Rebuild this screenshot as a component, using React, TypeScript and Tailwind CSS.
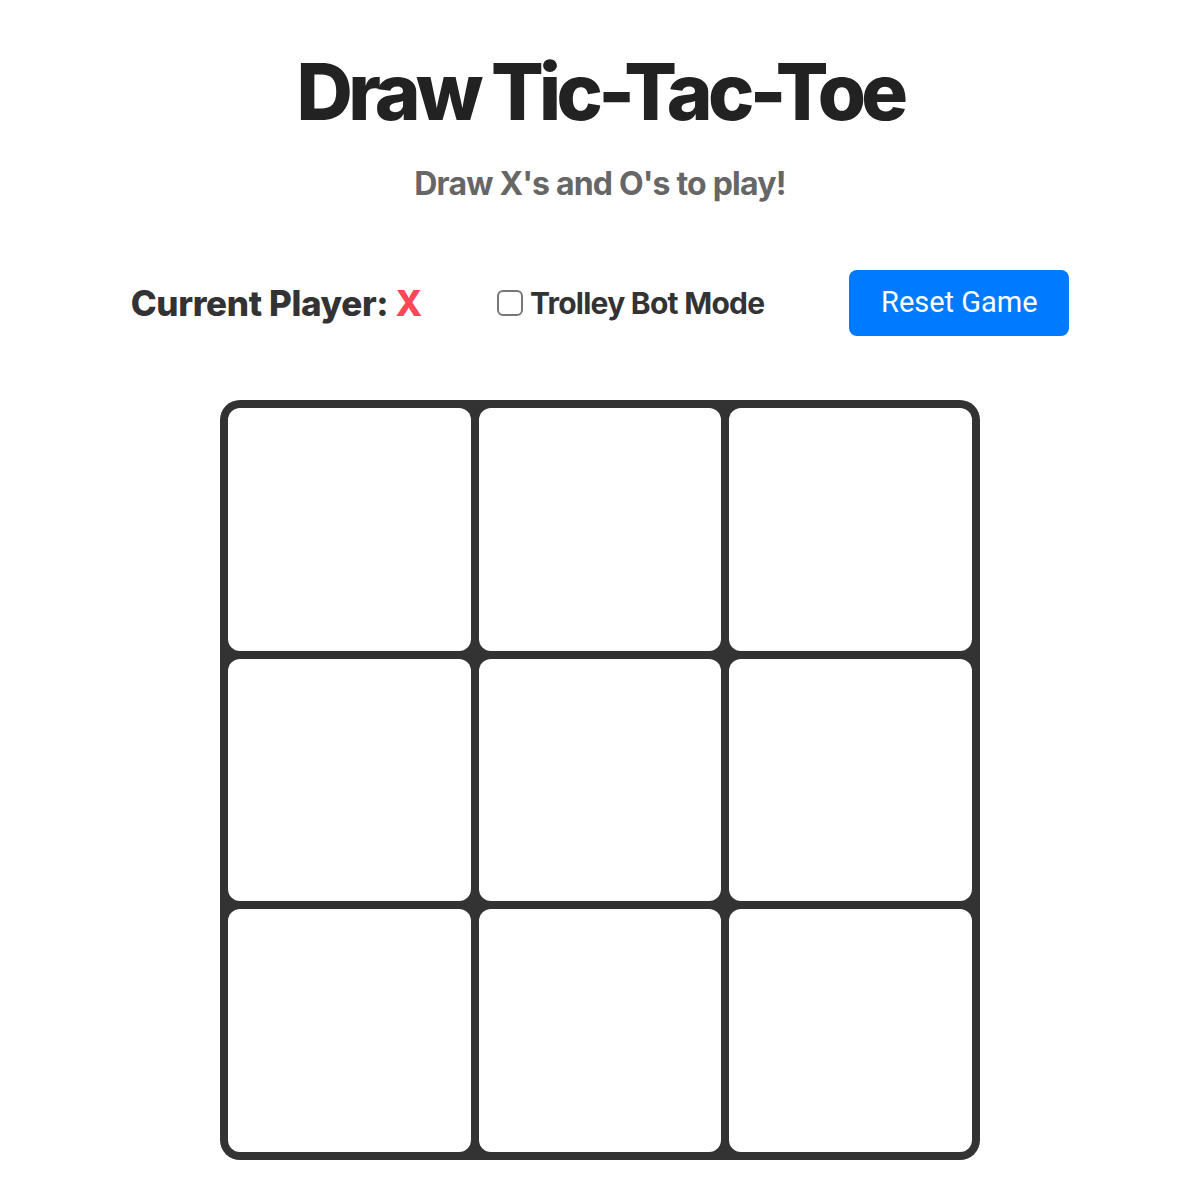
import { useState } from "react";

type Cell = "X" | "O" | null;

const App = () => {
  const [cells, setCells] = useState<Cell[]>(Array(9).fill(null));
  const [player, setPlayer] = useState<"X" | "O">("X");
  const [botMode, setBotMode] = useState(false);

  const reset = () => {
    setCells(Array(9).fill(null));
    setPlayer("X");
  };

  return (
    <div className="min-h-screen bg-white flex flex-col items-center font-['Inter',sans-serif]">
      {/* HEADER */}
      <h1 className="mt-[44px] text-[78px] leading-[96px] font-extrabold tracking-[-0.06em] text-[#222]">
        Draw Tic-Tac-Toe
      </h1>
      <p className="mt-[26px] text-[32px] leading-[36px] font-bold tracking-[-0.025em] text-[#666]">
        Draw X's and O's to play!
      </p>

      {/* CONTROLS */}
      <div className="mt-[68px] flex items-center">
        <div className="text-[35px] font-extrabold tracking-[-0.01em] text-[#333]">
          Current Player: <span className="text-[#ff4757]">{player}</span>
        </div>
        <label className="ml-[75px] flex items-center gap-[7px] text-[30px] font-bold tracking-[-0.025em] text-[#333]">
          <input
            type="checkbox"
            checked={botMode}
            onChange={(e) => setBotMode(e.target.checked)}
            className="w-[26px] h-[26px] appearance-none border-2 border-[#777] rounded-[6px] bg-white"
          />
          Trolley Bot Mode
        </label>
        <button
          onClick={reset}
          className="ml-[85px] w-[220px] h-[66px] rounded-[8px] bg-[#007bff] text-white text-[29px] font-['Roboto',sans-serif] font-normal"
        >
          Reset Game
        </button>
      </div>

      {/* BOARD */}
      <div className="mt-[64px] w-[760px] h-[760px] bg-[#333] rounded-[20px] p-[8px] grid grid-cols-3 grid-rows-3 gap-[8px]">
        {cells.map((c, i) => (
          <div
            key={i}
            onClick={() => {
              if (c) return;
              const next = [...cells];
              next[i] = player;
              setCells(next);
              setPlayer(player === "X" ? "O" : "X");
            }}
            className="bg-white rounded-[12px] flex items-center justify-center text-[120px] font-bold"
          >
            {c}
          </div>
        ))}
      </div>
    </div>
  );
};

export default App;
